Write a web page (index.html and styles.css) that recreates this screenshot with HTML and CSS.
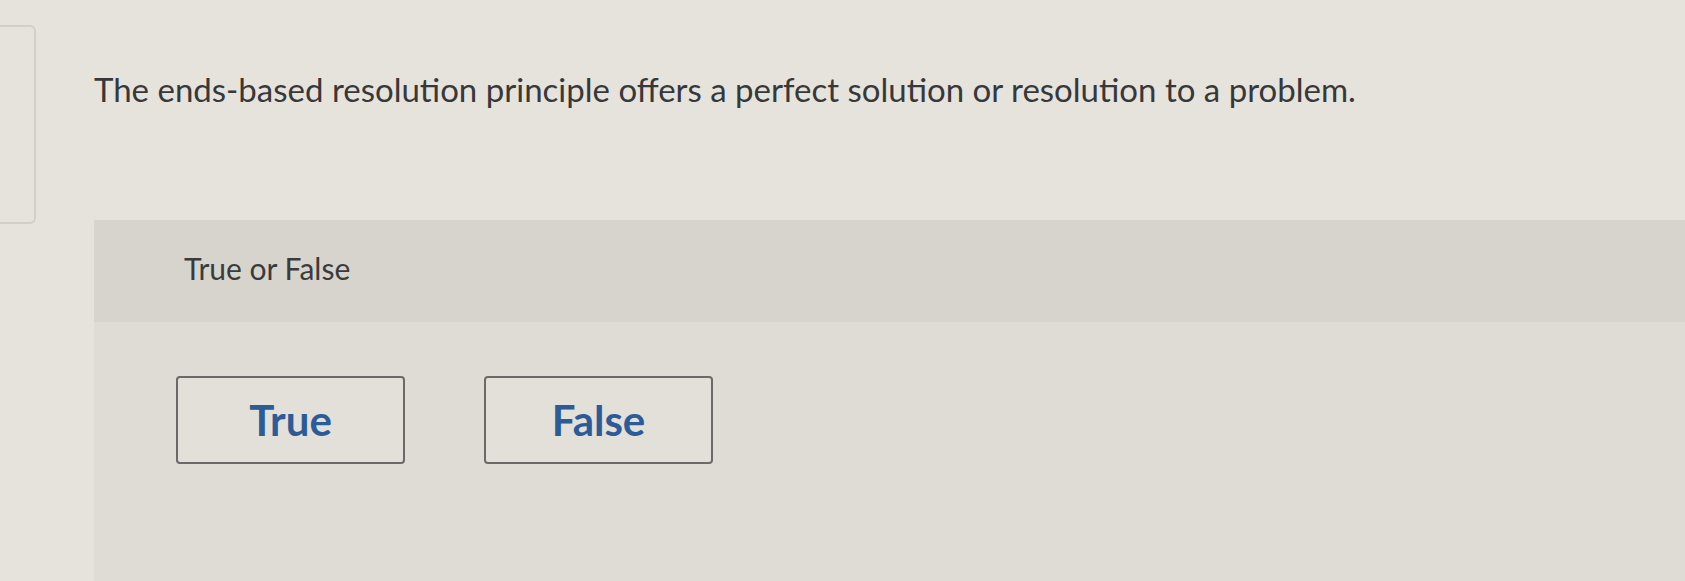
FILE: index.html
```html
<!DOCTYPE html>
<html lang="en">

<head>
    <meta charset="UTF-8">
    <title>True or False</title>
    <link rel="stylesheet" href="styles.css">
</head>

<body>
    <div class="side-card"></div>
    <main class="question">
        <p class="prompt">The ends-based resolution principle offers a perfect solution or resolution to a problem.</p>
        <section class="answer-panel">
            <div class="answer-type">True or False</div>
            <div class="choices">
                <button class="choice">True</button>
                <button class="choice">False</button>
            </div>
        </section>
    </main>
</body>

</html>
```

FILE: styles.css
```css
body {
    margin: 0;
    height: 581px;
    overflow: hidden;
    font-family: Lato, "Open Sans", sans-serif;
    background-color: #e6e3dc;
    position: relative;
}

/* card peeking in on the left edge */
.side-card {
    position: absolute;
    left: -12px;
    top: 25px;
    width: 44px;
    height: 195px;
    border: 2px solid #d3cfc8;
    border-radius: 6px;
}

.question {
    padding: 0 0 0 94px;
}

.prompt {
    margin: 0;
    padding-top: 69px;
    height: 220px;
    box-sizing: border-box;
    font-size: 33px;
    color: #37383a;
    line-height: 40px;
}

.answer-panel {
    background-color: #dfdcd5;
    height: 361px;
}

.answer-type {
    height: 102px;
    background-color: #d7d4cd;
    padding: 30px 0 0 90px;
    box-sizing: border-box;
    font-size: 30px;
    color: #3a3b3d;
}

.choices {
    display: flex;
    gap: 79px;
    padding: 54px 0 0 82px;
}

.choice {
    width: 229px;
    height: 88px;
    border: 2px solid #6a6a6a;
    border-radius: 4px;
    background-color: #e3e0d9;
    font-family: Lato, "Open Sans", sans-serif;
    font-weight: 700;
    font-size: 42px;
    color: #2c5c98;
}
```
